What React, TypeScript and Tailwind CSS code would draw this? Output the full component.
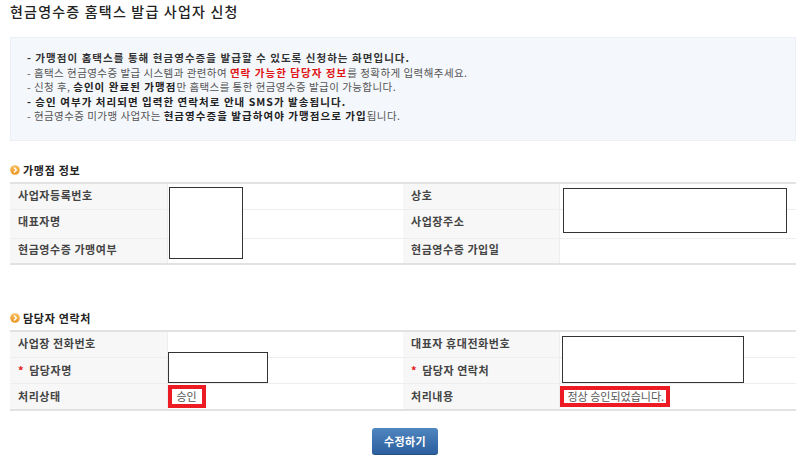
import React from 'react';

const font = { kr: "font-['Noto_Sans_CJK_KR','Noto_Sans',sans-serif]" };

const Th: React.FC<{ children: React.ReactNode; h: string; last?: boolean }> = ({ children, h, last }) => (
  <th className={`${h} bg-[#f7f7f7] pl-[8px] text-left text-[11px] font-bold text-[#444] tracking-[0.55px] border-r border-[#eeeeee] ${last ? '' : 'border-b border-[#eeeeee]'}`}>
    {children}
  </th>
);

const Td: React.FC<{ children?: React.ReactNode; last?: boolean }> = ({ children, last }) => (
  <td className={`relative text-[11px] text-[#555] ${last ? '' : 'border-b border-[#eeeeee]'}`}>{children}</td>
);

const Redact: React.FC<{ className: string }> = ({ className }) => (
  <div className={`absolute z-10 bg-white border border-[#333] ${className}`} />
);

const Req = () => <span className="text-[#e01515] mr-[5px]">*</span>;

const SectionTitle: React.FC<{ children: React.ReactNode }> = ({ children }) => (
  <div className="flex items-center gap-[3px] h-[16px] text-[11px] font-bold text-[#222] tracking-[0.7px]">
    <svg width="10" height="10" viewBox="0 0 10 10">
      <defs>
        <linearGradient id="dot" x1="0" y1="0" x2="0" y2="1">
          <stop offset="0" stopColor="#f8c060" />
          <stop offset="1" stopColor="#ec9420" />
        </linearGradient>
      </defs>
      <circle cx="5" cy="5" r="4.8" fill="url(#dot)" />
      <path d="M4 2.6 6.4 5 4 7.4" fill="none" stroke="#fff" strokeWidth="1.4" />
    </svg>
    {children}
  </div>
);

const Table: React.FC<{ children: React.ReactNode }> = ({ children }) => (
  <table className="w-full table-fixed border-collapse border-t-2 border-b-2 border-[#e2e2e2]">
    <colgroup>
      <col className="w-[157px]" />
      <col className="w-[236px]" />
      <col className="w-[156px]" />
      <col />
    </colgroup>
    <tbody>{children}</tbody>
  </table>
);

export default function App() {
  return (
    <div className={`relative w-[800px] h-[463px] overflow-hidden bg-white pl-[10px] pr-[4px] ${font.kr}`}>
      <h1 className="h-[37px] pt-[1px] text-[14px] leading-[20px] font-medium text-[#222] tracking-[1.2px]">
        현금영수증 홈택스 발급 사업자 신청
      </h1>

      <div className="h-[104px] bg-[#f4f7fb] border border-[#eceff3] pl-[16px] pt-[13px] text-[10.5px] leading-[14.6px] text-[#555] tracking-[0.45px]">
        <p className="font-bold text-[#333] tracking-[1.05px]">- 가맹점이 홈택스를 통해 현금영수증을 발급할 수 있도록 신청하는 화면입니다.</p>
        <p>- 홈택스 현금영수증 발급 시스템과 관련하여 <b className="text-[#e01515] tracking-[1.05px]">연락 가능한 담당자 정보</b>를 정확하게 입력해주세요.</p>
        <p>- 신청 후, <b className="text-[#222] tracking-[1.05px]">승인이 완료된 가맹점</b>만 홈택스를 통한 현금영수증 발급이 가능합니다.</p>
        <p className="font-bold text-[#222] tracking-[1.05px]">- 승인 여부가 처리되면 입력한 연락처로 안내 SMS가 발송됩니다.</p>
        <p>- 현금영수증 미가맹 사업자는 <b className="text-[#222] tracking-[1.05px]">현금영수증을 발급하여야 가맹점으로 가입</b>됩니다.</p>
      </div>

      <div className="mt-[21px] mb-[4px]">
        <SectionTitle>가맹점 정보</SectionTitle>
      </div>
      <div className="relative">
        <Table>
          <tr><Th h="h-[26px] pb-[2px]">사업자등록번호</Th><Td /><Th h="h-[26px] pb-[2px]">상호</Th><Td /></tr>
          <tr><Th h="h-[29px] pb-[4px]">대표자명</Th><Td /><Th h="h-[29px] pb-[4px]">사업장주소</Th><Td /></tr>
          <tr><Th h="h-[26px] pb-[4px]" last>현금영수증 가맹여부</Th><Td last /><Th h="h-[26px] pb-[4px]" last>현금영수증 가입일</Th><Td last /></tr>
        </Table>
        <Redact className="left-[159px] top-[5px] w-[74px] h-[72px]" />
        <Redact className="left-[553px] top-[6px] w-[224px] h-[45px]" />
      </div>

      <div className="mt-[45px] mb-[4px]">
        <SectionTitle>담당자 연락처</SectionTitle>
      </div>
      <div className="relative">
        <Table>
          <tr><Th h="h-[26px] pb-[2px]">사업장 전화번호</Th><Td /><Th h="h-[26px] pb-[2px]">대표자 휴대전화번호</Th><Td /></tr>
          <tr><Th h="h-[26px]"><Req />담당자명</Th><Td /><Th h="h-[26px]"><Req />담당자 연락처</Th><Td /></tr>
          <tr>
            <Th h="h-[27px]" last>처리상태</Th>
            <Td last><span className="block border-[4px] border-[#ed1c24] bg-white pl-[5px] leading-[15px] w-[38px]">승인</span></Td>
            <Th h="h-[27px]" last>처리내용</Th>
            <Td last><span className="block border-[4px] border-[#ed1c24] bg-white pl-[4px] leading-[13px] w-[110px] whitespace-nowrap">정상 승인되었습니다.</span></Td>
          </tr>
        </Table>
        <Redact className="left-[158px] top-[22px] w-[100px] h-[31px]" />
        <Redact className="left-[552px] top-[6px] w-[182px] h-[47px]" />
      </div>

      <div className="mt-[17px] flex justify-center pl-[4px]">
        <button className="w-[66px] h-[27px] rounded-[3px] bg-gradient-to-b from-[#4f86bf] to-[#2c5f9f] border-b border-[#24507f] text-[11px] font-bold text-white tracking-[0.4px]">
          수정하기
        </button>
      </div>
    </div>
  );
}
